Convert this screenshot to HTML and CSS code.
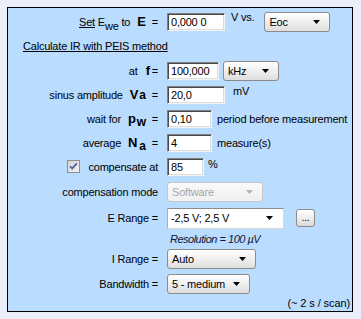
FILE: index.html
```html
<!DOCTYPE html>
<html>
<head>
<meta charset="utf-8">
<link rel="stylesheet" href="styles.css">
</head>
<body>
<div class="panel">
  <div class="row r1">
    <div class="lbl"><u>Set</u> E<sub>we</sub> to<b class="v">E</b>=</div>
    <div class="ctl">
      <span class="inp w58">0,000 0</span>
      <span class="unit u1">V vs.</span>
      <span class="sel w66"><span>Eoc</span><svg class="arr" width="7" height="4" viewBox="0 0 7 4"><polygon points="0,0 7,0 3.5,4" fill="#000"/></svg></span>
    </div>
  </div>
  <div class="row r2"><span class="link">Calculate IR with PEIS method</span></div>
  <div class="row r3">
    <div class="lbl">at<b class="v vf">f</b>=</div>
    <div class="ctl">
      <span class="inp w52">100,000</span>
      <span class="sel w56 gap4"><span>kHz</span><svg class="arr" width="7" height="4" viewBox="0 0 7 4"><polygon points="0,0 7,0 3.5,4" fill="#000"/></svg></span>
    </div>
  </div>
  <div class="row r4">
    <div class="lbl">sinus amplitude<b class="v">V<span class="s0">a</span></b>=</div>
    <div class="ctl">
      <span class="inp w58">20,0</span>
      <span class="unit u2">mV</span>
    </div>
  </div>
  <div class="row r5">
    <div class="lbl">wait for<b class="v">p<span class="s1">w</span></b>=</div>
    <div class="ctl">
      <span class="inp w45">0,10</span>
      <span class="unit u3">period before measurement</span>
    </div>
  </div>
  <div class="row r6">
    <div class="lbl">average<b class="v">N<span class="s2">a</span></b>=</div>
    <div class="ctl">
      <span class="inp w45">4</span>
      <span class="unit u3">measure(s)</span>
    </div>
  </div>
  <div class="row r7">
    <div class="lbl"><svg class="chk" width="13" height="13" viewBox="0 0 13 13"><defs><linearGradient id="cg" x1="0" y1="0" x2="1" y2="1"><stop offset="0" stop-color="#d0d0d0"/><stop offset="1" stop-color="#f2f2f2"/></linearGradient></defs><rect x="0.5" y="0.5" width="12" height="12" fill="url(#cg)" stroke="#8e8f8f"/><path d="M3 6.2 L5.2 8.6 L9.8 3.4" fill="none" stroke="#4a56a8" stroke-width="1.6"/></svg>compensate at</div>
    <div class="ctl">
      <span class="inp w37">85</span>
      <span class="unit u4">%</span>
    </div>
  </div>
  <div class="row r8">
    <div class="lbl">compensation mode</div>
    <div class="ctl">
      <span class="sel dis w96"><span>Software</span><svg class="arr" width="7" height="4" viewBox="0 0 7 4"><polygon points="0,0 7,0 3.5,4" fill="#b4b4b4"/></svg></span>
    </div>
  </div>
  <div class="row r9">
    <div class="lbl">E Range =</div>
    <div class="ctl">
      <span class="sel edit w117"><span>-2,5 V; 2,5 V</span><svg class="arr" width="7" height="4" viewBox="0 0 7 4"><polygon points="0,0 7,0 3.5,4" fill="#000"/></svg></span>
      <span class="btn">...</span>
    </div>
  </div>
  <div class="row r10">
    <div class="lbl"></div>
    <div class="ctl"><span class="res">Resolution = 100 µV</span></div>
  </div>
  <div class="row r11">
    <div class="lbl">I Range =</div>
    <div class="ctl">
      <span class="sel w89"><span>Auto</span><svg class="arr" width="7" height="4" viewBox="0 0 7 4"><polygon points="0,0 7,0 3.5,4" fill="#000"/></svg></span>
    </div>
  </div>
  <div class="row r12">
    <div class="lbl">Bandwidth =</div>
    <div class="ctl">
      <span class="sel w83"><span>5 - medium</span><svg class="arr" width="7" height="4" viewBox="0 0 7 4"><polygon points="0,0 7,0 3.5,4" fill="#000"/></svg></span>
    </div>
  </div>
  <div class="row r13"><span class="scan">(~ 2 s / scan)</span></div>
</div>
</body>
</html>
```
FILE: styles.css
```css
html, body {
  margin: 0;
  padding: 0;
  background: #ebeff9;
}
body {
  font-family: "Liberation Sans", Arial, sans-serif;
  font-size: 11px;
  letter-spacing: -0.2px;
  color: #000;
}
.panel {
  box-sizing: border-box;
  margin: 7px 0 0 7px;
  width: 346px;
  height: 305px;
  border: 1px solid #000;
  background: #b9dcff;
  padding-top: 2px;
}
.row {
  display: flex;
  align-items: center;
  height: 24px;
}
.r3 { height: 25px; }
.r8 { height: 25px; }
.r9 { height: 28px; }
.r10 { height: 14px; }
.r11 { height: 26px; }
.r13 { height: 14px; justify-content: flex-end; padding-right: 2px; }
.lbl {
  flex: none;
  width: 150px;
  display: block;
  text-align: right;
  white-space: nowrap;
  line-height: 16px;
}
.ctl {
  margin-left: 9px;
  display: flex;
  align-items: center;
  white-space: nowrap;
}
sub {
  font-size: 11px;
  vertical-align: -4px;
  line-height: 0;
}
.v {
  font-weight: bold;
  font-size: 13px;
  margin: 0 6px 0 7px;
}
.vf { margin-right: 2px; margin-left: 8px; }
.s0 { font-size: 12px; margin-left: 1px; }
.s1 { font-size: 12px; position: relative; top: 3px; margin-left: 1px; }
.s2 { font-size: 12px; position: relative; top: 3px; margin-left: 2px; }
.link {
  text-decoration: underline;
  margin-left: 15px;
}
.inp {
  box-sizing: border-box;
  height: 18px;
  background: #fff;
  border: 1px solid;
  border-color: #7f7f7f #f4f4f4 #f4f4f4 #7f7f7f;
  box-shadow: inset 1px 1px 0 #4a4a4a, inset -1px -1px 0 #dcdcdc;
  padding: 0 3px;
  line-height: 16px;
}
.w58 { width: 58px; }
.w52 { width: 52px; }
.w45 { width: 45px; }
.w37 { width: 37px; }
.w66 { width: 66px; }
.w56 { width: 56px; }
.w96 { width: 96px; }
.w117 { width: 117px; }
.w89 { width: 89px; }
.w83 { width: 83px; }
.gap4 { margin-left: 4px; }
.unit { line-height: 14px; }
.u1 { margin-left: 6px; margin-right: 10px; align-self: flex-start; margin-top: -2px; }
.u2 { margin-left: 8px; align-self: flex-start; margin-top: -2px; }
.u3 { margin-left: 5px; }
.u4 { margin-left: 4px; align-self: flex-start; margin-top: -1px; }
.sel {
  box-sizing: border-box;
  height: 20px;
  border: 1px solid #8b8b8b;
  border-radius: 3px;
  background: linear-gradient(#ffffff, #f1f1f1 45%, #dedede);
  display: flex;
  align-items: center;
  justify-content: space-between;
  padding: 0 9px 0 4px;
}
.sel.dis {
  border-color: #c6c6c6;
  background: linear-gradient(#fafafa, #f0f0f0);
  color: #a6a6a6;
}
.sel.edit {
  height: 21px;
  border-radius: 0;
  background: #fff;
  border-color: #8c8c8c #d8d8d8 #d8d8d8 #b0b0b0;
  padding-left: 3px;
  padding-right: 10px;
}
.arr { display: block; flex: none; }
.btn {
  box-sizing: border-box;
  width: 19px;
  height: 18px;
  margin-left: 12px;
  border: 1px solid #8b8b8b;
  border-radius: 3px;
  background: linear-gradient(#ffffff, #eeeeee 50%, #d9d9d9);
  display: flex;
  justify-content: center;
  align-items: flex-end;
  line-height: 12px;
  font-size: 10px;
  padding-bottom: 2px;
}
.chk { margin-right: 8px; vertical-align: -2px; }
.res {
  font-style: italic;
  color: #10183a;
  margin-left: 3px;
  letter-spacing: -0.5px;
}
.scan { letter-spacing: -0.1px; }
```
